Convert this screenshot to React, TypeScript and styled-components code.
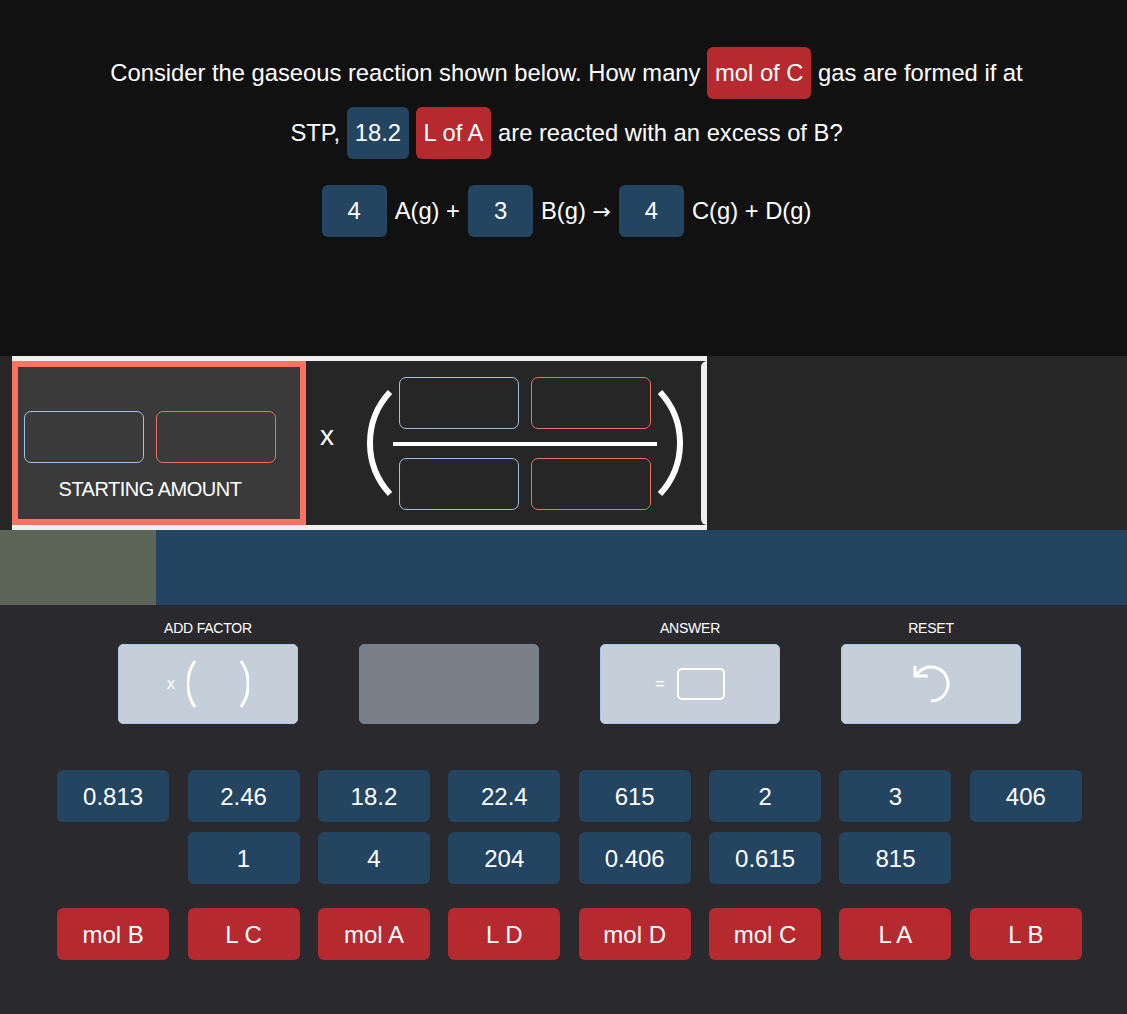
import React from "react";
import styled, { createGlobalStyle } from "styled-components";

const GlobalStyle = createGlobalStyle`
  html, body {
    margin: 0;
    padding: 0;
    background: #2a292e;
  }
  body {
    font-family: "Liberation Sans", Arial, sans-serif;
    color: #ffffff;
  }
`;

const Page = styled.div`
  min-height: 100vh;
  background: #2a292e;
`;

const Question = styled.section`
  height: 356px;
  box-sizing: border-box;
  padding: 43px 0 0 6px;
  background: #111111;
`;

const Prompt = styled.p`
  max-width: 950px;
  margin: 0 auto;
  font-size: 23.75px;
  line-height: 60px;
  text-align: center;
`;

const Chip = styled.span<{ $tone: "blue" | "red" }>`
  display: inline-block;
  padding: 12px 8px;
  line-height: normal;
  border-radius: 6px;
  background: ${(p) => (p.$tone === "red" ? "#b6292e" : "#244562")};
  color: #ffffff;
`;

const Equation = styled.div`
  display: flex;
  justify-content: center;
  align-items: center;
  gap: 8px;
  margin-top: 22px;
  font-size: 23.75px;
`;

const Arrow = styled.span`
  font-family: "DejaVu Sans", sans-serif;
  font-size: 22px;
`;

const Coef = styled.span`
  display: flex;
  align-items: center;
  justify-content: center;
  width: 65px;
  height: 52px;
  border-radius: 6px;
  background: #244562;
`;

const Band = styled.section`
  display: flex;
  height: 174px;
  padding-left: 12px;
  background: #262626;
`;

const Track = styled.div`
  display: flex;
  align-items: center;
  border-top: 5px solid #efefef;
  border-bottom: 5px solid #efefef;
`;

const StartBox = styled.div`
  box-sizing: border-box;
  width: 294px;
  height: 164px;
  padding: 44px 0 0 6px;
  border: 6px solid #f87462;
  background: #3a3a3a;
`;

const StartColumn = styled.div`
  display: flex;
  flex-direction: column;
  align-items: center;
  width: 252px;
`;

const Pair = styled.div`
  display: flex;
  gap: 12px;
`;

const Slot = styled.div<{ $kind: "value" | "unit" }>`
  box-sizing: border-box;
  width: 120px;
  height: 52px;
  border-radius: 7px;
  border: 1px solid ${(p) => (p.$kind === "unit" ? "#e8735f" : "#9fc0e6")};
`;

const StartLabel = styled.div`
  margin-top: 15px;
  font-size: 20px;
  letter-spacing: -0.5px;
  line-height: 23px;
`;

const Times = styled.span`
  margin: 0 33px 14px 14px;
  font-size: 28px;
  line-height: 1;
`;

const Fraction = styled.div`
  display: flex;
  flex-direction: column;
  align-items: center;
  width: 264px;
`;

const FractionLine = styled.div`
  width: 264px;
  height: 4px;
  margin: 13px 0 12px;
  background: #ffffff;
`;

const EdgeBar = styled.div`
  align-self: stretch;
  width: 6px;
  margin-left: 18px;
  border-radius: 8px 0 0 8px;
  background: #efefef;
`;

const Progress = styled.div`
  display: flex;
  height: 75px;
  background: #244562;
`;

const ProgressDone = styled.div`
  width: 156px;
  background: #5b6456;
`;

const Controls = styled.section`
  padding: 15px 0 0 12px;
`;

const ActionRow = styled.div`
  display: grid;
  grid-template-columns: repeat(4, 180px);
  column-gap: 61px;
  justify-content: center;
`;

const Action = styled.div`
  display: flex;
  flex-direction: column;
  align-items: center;
`;

const ActionLabel = styled.div`
  height: 16px;
  margin-bottom: 8px;
  font-size: 14px;
  line-height: 16px;
  letter-spacing: -0.2px;
`;

const ActionButton = styled.button<{ $disabled?: boolean }>`
  display: flex;
  align-items: center;
  justify-content: center;
  gap: 12px;
  box-sizing: border-box;
  width: 180px;
  height: 80px;
  padding: 0;
  border-radius: 5px;
  border: 1px solid ${(p) => (p.$disabled ? "#7a7f87" : "#a9c8ea")};
  background: ${(p) => (p.$disabled ? "#7a7f87" : "#c6cfd9")};
  color: #ffffff;
  font-family: inherit;
`;

const SmallGlyph = styled.span`
  font-size: 16px;
  line-height: 1;
  color: #ffffff;
`;

const AnswerBox = styled.span`
  box-sizing: border-box;
  width: 48px;
  height: 32px;
  border: 2px solid #ffffff;
  border-radius: 5px;
`;

const Tiles = styled.div<{ $gapTop?: number }>`
  display: grid;
  grid-template-columns: repeat(8, 112px);
  column-gap: 18.4px;
  row-gap: 10px;
  justify-content: center;
  margin-top: ${(p) => p.$gapTop ?? 0}px;
`;

const Tile = styled.div<{ $tone: "blue" | "red"; $col?: number }>`
  display: flex;
  align-items: center;
  justify-content: center;
  height: 52px;
  padding-top: 2px;
  box-sizing: border-box;
  border-radius: 6px;
  background: ${(p) => (p.$tone === "red" ? "#b6292e" : "#244562")};
  font-size: 24px;
  ${(p) => (p.$col ? `grid-column-start: ${p.$col};` : "")}
`;

const BigParen = ({ side }: { side: "left" | "right" }) => (
  <svg width="26" height="108" viewBox="0 0 26 108">
    <path
      d={side === "left" ? "M23 3 A75 75 0 0 0 23 105" : "M3 3 A75 75 0 0 1 3 105"}
      fill="none"
      stroke="#ffffff"
      strokeWidth="6"
    />
  </svg>
);

const FactorIcon = () => (
  <svg width="62" height="50" viewBox="0 0 62 50">
    <path d="M8 2 A40 40 0 0 0 8 48" fill="none" stroke="#ffffff" strokeWidth="3" />
    <path d="M54 2 A40 40 0 0 1 54 48" fill="none" stroke="#ffffff" strokeWidth="3" />
  </svg>
);

const ResetIcon = () => (
  <svg width="40" height="40" viewBox="0 0 40 40">
    <path
      d="M20 37 A17 17 0 1 0 8 8 L4 12"
      fill="none"
      stroke="#ffffff"
      strokeWidth="3"
    />
    <path d="M4 2 V12 H17" fill="none" stroke="#ffffff" strokeWidth="3" />
  </svg>
);

const numbers = ["0.813", "2.46", "18.2", "22.4", "615", "2", "3", "406"];
const moreNumbers = ["1", "4", "204", "0.406", "0.615", "815"];
const units = ["mol B", "L C", "mol A", "L D", "mol D", "mol C", "L A", "L B"];

export default function App() {
  return (
    <Page>
      <GlobalStyle />
      <Question>
        <Prompt>
          Consider the gaseous reaction shown below. How many <Chip $tone="red">mol of C</Chip> gas
          are formed if at STP, <Chip $tone="blue">18.2</Chip> <Chip $tone="red">L of A</Chip> are
          reacted with an excess of B?
        </Prompt>
        <Equation>
          <Coef>4</Coef>
          <span>A(g) +</span>
          <Coef>3</Coef>
          <span>
            B(g) <Arrow>→</Arrow>
          </span>
          <Coef>4</Coef>
          <span>C(g) + D(g)</span>
        </Equation>
      </Question>

      <Band>
        <Track>
          <StartBox>
            <StartColumn>
              <Pair>
                <Slot $kind="value" />
                <Slot $kind="unit" />
              </Pair>
              <StartLabel>STARTING AMOUNT</StartLabel>
            </StartColumn>
          </StartBox>
          <Times>x</Times>
          <BigParen side="left" />
          <Fraction>
            <Pair>
              <Slot $kind="value" />
              <Slot $kind="unit" />
            </Pair>
            <FractionLine />
            <Pair>
              <Slot $kind="value" />
              <Slot $kind="unit" />
            </Pair>
          </Fraction>
          <BigParen side="right" />
          <EdgeBar />
        </Track>
      </Band>

      <Progress>
        <ProgressDone />
      </Progress>

      <Controls>
        <ActionRow>
          <Action>
            <ActionLabel>ADD FACTOR</ActionLabel>
            <ActionButton>
              <SmallGlyph>x</SmallGlyph>
              <FactorIcon />
            </ActionButton>
          </Action>
          <Action>
            <ActionLabel />
            <ActionButton $disabled />
          </Action>
          <Action>
            <ActionLabel>ANSWER</ActionLabel>
            <ActionButton>
              <SmallGlyph>=</SmallGlyph>
              <AnswerBox />
            </ActionButton>
          </Action>
          <Action>
            <ActionLabel>RESET</ActionLabel>
            <ActionButton>
              <ResetIcon />
            </ActionButton>
          </Action>
        </ActionRow>

        <Tiles $gapTop={46}>
          {numbers.map((n) => (
            <Tile key={n} $tone="blue">
              {n}
            </Tile>
          ))}
          {moreNumbers.map((n, i) => (
            <Tile key={n} $tone="blue" $col={i === 0 ? 2 : undefined}>
              {n}
            </Tile>
          ))}
        </Tiles>
        <Tiles $gapTop={24}>
          {units.map((u) => (
            <Tile key={u} $tone="red">
              {u}
            </Tile>
          ))}
        </Tiles>
      </Controls>
    </Page>
  );
}
